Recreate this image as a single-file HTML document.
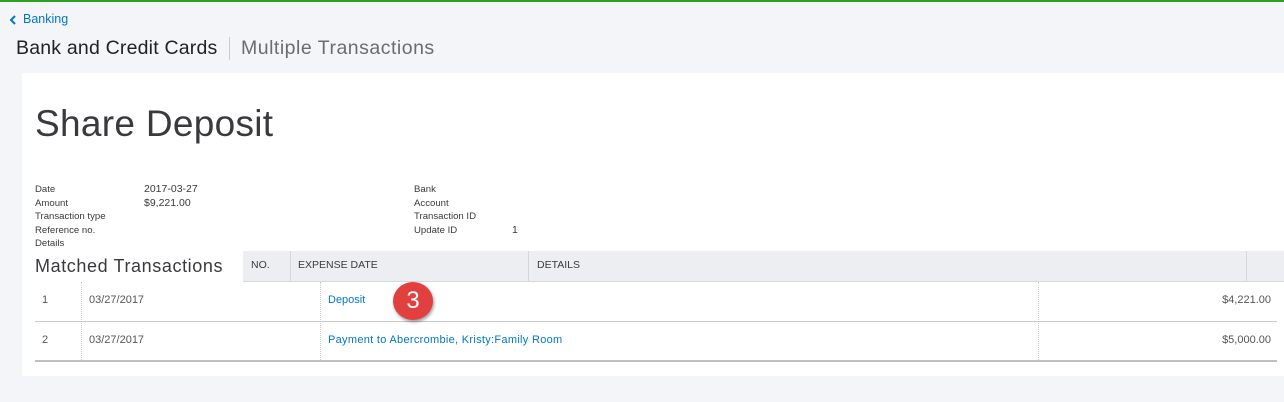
<!DOCTYPE html>
<html><head><style>
body{margin:0;width:1284px;height:402px;background:#f4f5f8;font-family:"Liberation Sans",sans-serif;position:relative;overflow:hidden;color:#393a3d}
.a{position:absolute;white-space:nowrap}
.s{font-size:9.6px;color:#393a3d}
.t{font-size:11px;color:#555}
</style></head><body>
<div class="a" style="left:0;top:0;width:1284px;height:2px;background:#2ca01c"></div>
<svg class="a" style="left:9px;top:15px" width="8" height="10"><path d="M6 1 L2 5 L6 9" stroke="#0077c5" stroke-width="2" fill="none"/></svg>
<div class="a" style="left:23px;top:12px;font-size:12.5px;color:#0077c5">Banking</div>
<div class="a" style="left:16px;top:37px;font-size:19.5px;color:#222;letter-spacing:0.2px">Bank and Credit Cards</div>
<div class="a" style="left:229px;top:37px;width:1px;height:23px;background:#ccc"></div>
<div class="a" style="left:241px;top:37px;font-size:19.5px;color:#6b6c72;letter-spacing:0.5px">Multiple Transactions</div>
<div class="a" style="left:22px;top:73px;width:1262px;height:303px;background:#fff"></div>
<div class="a" style="left:35px;top:103px;font-size:37px;color:#393a3d;letter-spacing:0.3px">Share Deposit</div>
<div class="a s" style="left:35px;top:183px;line-height:13.5px">Date<br>Amount<br>Transaction type<br>Reference no.<br>Details</div>
<div class="a s" style="left:144px;top:183px;line-height:13.5px;font-size:10.5px">2017-03-27<br>$9,221.00</div>
<div class="a s" style="left:414px;top:183px;line-height:13.5px">Bank<br>Account<br>Transaction ID<br>Update ID</div>
<div class="a s" style="left:512px;top:224px;font-size:10.5px">1</div>
<div class="a" style="left:35px;top:256px;font-size:18px;color:#393a3d;letter-spacing:0.6px">Matched Transactions</div>
<div class="a" style="left:243px;top:251px;width:1041px;height:30px;background:#eceef1;border-bottom:1px solid #d4d7dc"></div>
<div class="a" style="left:290px;top:251px;width:1px;height:30px;background:#d4d7dc"></div>
<div class="a" style="left:528px;top:251px;width:1px;height:30px;background:#d4d7dc"></div>
<div class="a" style="left:1246px;top:251px;width:1px;height:30px;background:#d4d7dc"></div>
<div class="a" style="left:251px;top:259px;font-size:10.5px">NO.</div>
<div class="a" style="left:298px;top:259px;font-size:10.5px">EXPENSE DATE</div>
<div class="a" style="left:537px;top:259px;font-size:10.5px">DETAILS</div>
<div class="a" style="left:35px;top:321px;width:1242px;height:1px;background:#c8c8c8"></div>
<div class="a" style="left:35px;top:360px;width:1242px;height:2px;background:#c0c0c0"></div>
<div class="a" style="left:81px;top:282px;height:78px;border-left:1px dotted #ccc"></div>
<div class="a" style="left:320px;top:282px;height:78px;border-left:1px dotted #ccc"></div>
<div class="a" style="left:1038px;top:282px;height:78px;border-left:1px dotted #ccc"></div>
<div class="a t" style="left:42px;top:294px">1</div>
<div class="a t" style="left:89px;top:294px">03/27/2017</div>
<div class="a t" style="left:328px;top:294px;color:#0077c5">Deposit</div>
<div class="a t" style="right:13px;top:294px">$4,221.00</div>
<div class="a t" style="left:42px;top:334px">2</div>
<div class="a t" style="left:89px;top:334px">03/27/2017</div>
<div class="a t" style="left:328px;top:334px;color:#0077c5;letter-spacing:0.3px">Payment to Abercrombie, Kristy:Family Room</div>
<div class="a t" style="right:13px;top:334px">$5,000.00</div>
<div class="a" style="left:393px;top:282px;width:40px;height:38px;border-radius:50%;background:#e2403f;box-shadow:1px 2px 3px rgba(0,0,0,.4);color:#fff;font-size:24px;text-align:center;line-height:38px">3</div>
</body></html>
